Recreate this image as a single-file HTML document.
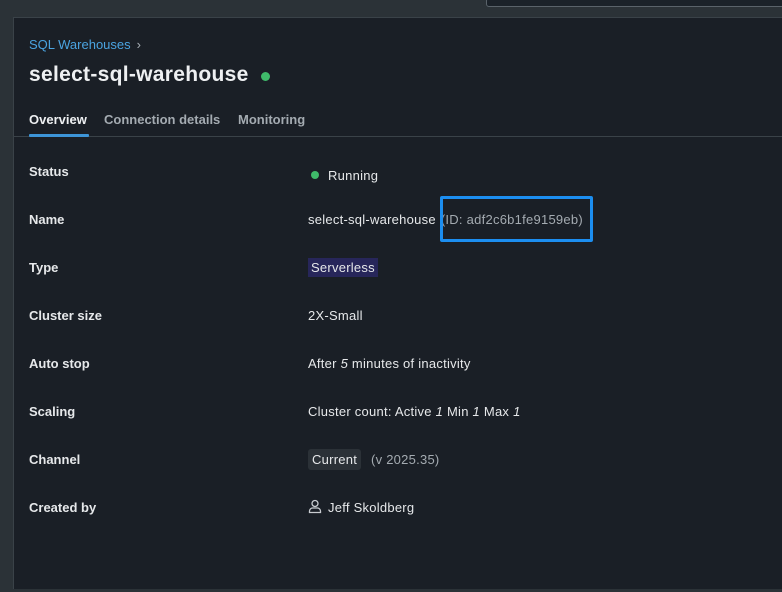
<!DOCTYPE html>
<html><head><style>
*{margin:0;padding:0;box-sizing:border-box}
body{width:782px;height:592px;background:#2b3237;font-family:"Liberation Sans",sans-serif;position:relative;overflow:hidden;color:#e3e6e9}
.topbox{position:absolute;left:486px;top:-2px;width:300px;height:9px;background:#1b2229;border:1px solid #5a636a;border-radius:3px}
.panel{position:absolute;left:13px;top:17px;width:775px;height:572px;background:#1a1f26;border-top:1px solid #3a4248;border-left:1px solid #3a4248}
.abs{position:absolute;white-space:nowrap}
.bc{left:15px;top:19px;font-size:13px;color:#4aa3e0}
.bc span{color:#a9b0b6;margin-left:6px}
h1{position:absolute;left:15px;top:45px;font-size:21px;font-weight:bold;color:#eef0f2;letter-spacing:0.3px}
.dot{position:absolute;border-radius:50%;background:#3fba6a}
.tabs{top:94px;font-size:13px;font-weight:bold}
.line{position:absolute;left:0;top:118px;width:775px;height:1px;background:#3a4248}
.ul{position:absolute;left:15px;top:116px;width:60px;height:3px;background:#3d95d8;border-radius:1px}
.lbl{left:15px;font-size:13px;font-weight:bold;color:#e6e8ea}
.val{left:294px;font-size:13px;color:#e6e8ea;letter-spacing:0.25px}
.g{color:#a4abb1}
</style></head><body>
<div class="topbox"></div>
<div class="panel">
<div class="abs bc">SQL Warehouses<span>›</span></div>
<h1>select-sql-warehouse</h1>
<div class="dot" style="left:247px;top:54px;width:9px;height:9px"></div>
<div class="abs tabs" style="left:15px;color:#eef0f2">Overview</div>
<div class="abs tabs" style="left:90px;color:#a4abb1">Connection details</div>
<div class="abs tabs" style="left:224px;color:#a4abb1">Monitoring</div>
<div class="line"></div><div class="ul"></div>

<div class="abs lbl" style="top:146px">Status</div>
<div class="dot" style="left:297px;top:153px;width:8px;height:8px"></div>
<div class="abs val" style="left:314px;top:150px">Running</div>

<div class="abs lbl" style="top:194px">Name</div>
<div class="abs val" style="top:194px">select-sql-warehouse<span class="g" style="margin-left:5px">(ID: adf2c6b1fe9159eb)</span></div>
<div class="abs" style="left:426px;top:178px;width:153px;height:46px;border:3px solid #1c8ef0;border-radius:2px"></div>

<div class="abs lbl" style="top:242px">Type</div>
<div class="abs val" style="top:240px;background:#27265a;padding:2px 3px;left:294px">Serverless</div>

<div class="abs lbl" style="top:290px">Cluster size</div>
<div class="abs val" style="top:290px">2X-Small</div>

<div class="abs lbl" style="top:338px">Auto stop</div>
<div class="abs val" style="top:338px">After <i>5</i> minutes of inactivity</div>

<div class="abs lbl" style="top:386px">Scaling</div>
<div class="abs val" style="top:386px">Cluster count: Active <i>1</i> Min <i>1</i> Max <i>1</i></div>

<div class="abs lbl" style="top:434px">Channel</div>
<div class="abs val" style="top:431px;background:#2b3137;padding:3px 4px;border-radius:3px">Current</div>
<div class="abs val g" style="left:357px;top:434px;color:#a4abb1">(v 2025.35)</div>

<div class="abs lbl" style="top:482px">Created by</div>
<svg class="abs" style="left:294px;top:481px" width="14" height="15" viewBox="0 0 14 15" fill="none" stroke="#c8ccd0" stroke-width="1.3"><circle cx="7" cy="4.5" r="3"/><path d="M1.5 13.5v-1.5c0-1.5 1.5-3 3-3h5c1.5 0 3 1.5 3 3v1.5z"/></svg>
<div class="abs val" style="left:314px;top:482px">Jeff Skoldberg</div>
</div>
</body></html>
